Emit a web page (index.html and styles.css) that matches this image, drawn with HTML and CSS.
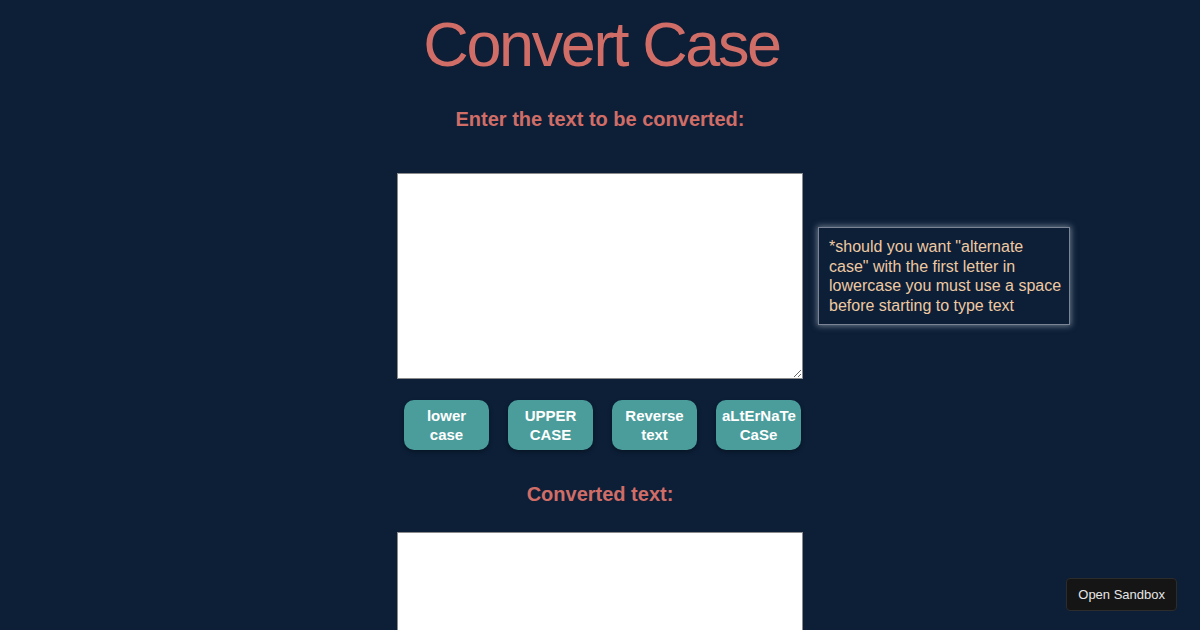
FILE: index.html
```html
<!DOCTYPE html>
<html lang="en">
<head>
<meta charset="utf-8">
<title>Convert Case</title>
<link rel="stylesheet" href="styles.css">
</head>
<body>
<main class="app">
  <h1 class="title">Convert Case</h1>
  <h2 class="label label-input">Enter the text to be converted:</h2>
  <div class="input-row">
    <div class="spacer"></div>
    <textarea class="text-box input-box"></textarea>
    <div class="note-col">
      <p class="note">*should you want "alternate case" with the first letter in lowercase you must use a space before starting to type text</p>
    </div>
  </div>
  <div class="buttons">
    <button class="btn">lower case</button>
    <button class="btn">UPPER CASE</button>
    <button class="btn">Reverse text</button>
    <button class="btn">aLtErNaTe CaSe</button>
  </div>
  <h2 class="label label-output">Converted text:</h2>
  <textarea class="text-box output-box"></textarea>
</main>
<button class="sandbox">Open Sandbox</button>
</body>
</html>
```
FILE: styles.css
```css
html, body {
  margin: 0;
  padding: 0;
  background: #0c1f37;
  height: 100%;
  overflow: hidden;
}
body {
  font-family: "Liberation Sans", Arial, sans-serif;
}
.app {
  display: flex;
  flex-direction: column;
  align-items: center;
}
.title {
  margin: 7px 0 0;
  padding-left: 3px;
  font-size: 63px;
  line-height: 74px;
  font-weight: 400;
  letter-spacing: -2.4px;
  color: #d16d67;
}
.label {
  margin: 0;
  font-size: 20px;
  line-height: 23px;
  font-weight: 700;
  color: #d16d67;
}
.label-input {
  margin-top: 27px;
}
.input-row {
  display: grid;
  grid-template-columns: 1fr 406px 1fr;
  width: 100%;
  margin-top: 42px;
  align-items: center;
}
.text-box {
  box-sizing: border-box;
  width: 406px;
  height: 206px;
  border: 1px solid #8a8a8a;
  background: #fff;
  margin: 0;
  padding: 2px;
  display: block;
}
.note-col {
  padding-left: 15px;
}
.note {
  box-sizing: border-box;
  width: 252px;
  margin: 0;
  padding: 9px 6px 9px 10px;
  border: 1px solid #7a8494;
  box-shadow: 0 0 6px 1px rgba(210, 215, 225, 0.5);
  color: #efc9a2;
  font-size: 16px;
  line-height: 19.5px;
}
.buttons {
  display: flex;
  gap: 19px;
  margin-top: 21px;
  padding-left: 5px;
}
.btn {
  box-sizing: border-box;
  width: 85px;
  height: 50px;
  padding: 0 6px;
  border: none;
  border-radius: 10px;
  background: #4a9d9b;
  color: #fff;
  font-family: "Liberation Sans", Arial, sans-serif;
  font-size: 15px;
  font-weight: 700;
  line-height: 19px;
  box-shadow: 0 2px 4px rgba(0, 0, 0, 0.35);
}
.label-output {
  margin-top: 33px;
}
.output-box {
  margin-top: 26px;
}
.sandbox {
  position: fixed;
  right: 23px;
  bottom: 19px;
  height: 33px;
  padding: 0 11px;
  background: #151515;
  border: 1px solid #2c2c2c;
  border-radius: 4px;
  color: #e6e6e6;
  font-family: "Liberation Sans", Arial, sans-serif;
  font-size: 13px;
}
```
